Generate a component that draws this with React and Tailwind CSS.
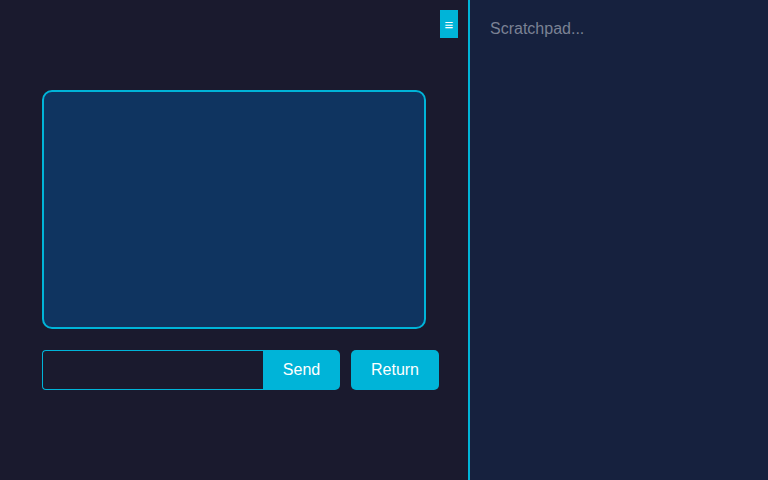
export default function App() {
  return (
    <div className="flex h-[480px] w-[768px] overflow-hidden font-['Liberation_Sans',Arial,sans-serif]">
      <div className="relative flex w-[470px] shrink-0 flex-col border-r-2 border-[#00b4d8] bg-[#1a1a2e] px-[42px] pt-[90px]">
        <button className="absolute right-[10px] top-[10px] flex h-[28px] w-[18px] items-center justify-center bg-[#00b4d8] text-[15px] leading-none text-white">
          ≡
        </button>
        <div className="h-[239px] w-[384px] rounded-[10px] border-2 border-[#00b4d8] bg-[#0f3460]" />
        <div className="mt-[21px] flex h-[40px] w-[397px] shrink-0 items-stretch">
          <input
            className="w-[221px] shrink-0 rounded-l-[4px] border border-r-0 border-[#00b4d8] bg-[#1a1a2e] px-2 text-white outline-none"
            type="text"
          />
          <button className="w-[77px] shrink-0 rounded-r-[5px] bg-[#00b4d8] text-[16px] text-white">Send</button>
          <button className="ml-[11px] w-[88px] shrink-0 rounded-[5px] bg-[#00b4d8] text-[16px] text-white">Return</button>
        </div>
      </div>
      <textarea
        className="flex-1 resize-none bg-[#16213e] px-[20px] pt-[17px] text-[16px] text-white outline-none placeholder:text-[#7b8294]"
        placeholder="Scratchpad..."
      />
    </div>
  )
}
